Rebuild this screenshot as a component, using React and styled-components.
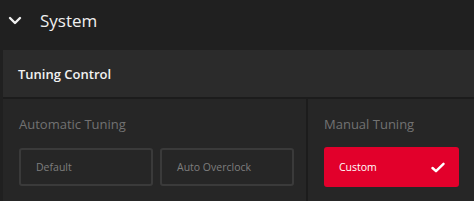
import React from "react";
import styled, { createGlobalStyle } from "styled-components";

const Global = createGlobalStyle`
  html, body {
    margin: 0;
    padding: 0;
    background: #202020;
    font-family: "Open Sans", "Noto Sans", sans-serif;
  }
`;

const Page = styled.div`
  width: 474px;
  height: 201px;
  overflow: hidden;
  background: #202020;
`;

const SectionHeader = styled.div`
  box-sizing: border-box;
  height: 50px;
  display: flex;
  align-items: center;
  padding: 0 0 9px 8px;
  gap: 18px;
  color: #f0f0f0;
  font-size: 17px;
`;

const Card = styled.div`
  margin-left: 3px;
  background: #262626;
`;

const CardHeader = styled.div`
  height: 47px;
  display: flex;
  align-items: center;
  padding-left: 15px;
  background: #2b2b2b;
  border-bottom: 2px solid #1c1c1c;
  color: #f2f2f2;
  font-size: 13px;
  font-weight: 600;
`;

const Body = styled.div`
  display: grid;
  grid-template-columns: 303px 2px 1fr;
  height: 102px;
`;

const Divider = styled.div`
  background: #1c1c1c;
`;

const Column = styled.div`
  padding: 15px 0 0 16px;
`;

const ColumnTitle = styled.div`
  color: #727272;
  font-size: 13px;
  line-height: 20px;
  margin-bottom: 14px;
`;

const Options = styled.div`
  display: flex;
  gap: 7px;
`;

const Option = styled.div`
  box-sizing: border-box;
  width: ${(p) => p.$w || 134}px;
  height: ${(p) => (p.$active ? 40 : 38)}px;
  margin-top: ${(p) => (p.$active ? -1 : 0)}px;
  display: flex;
  align-items: center;
  justify-content: space-between;
  padding: 0 ${(p) => (p.$active ? 14 : 16)}px 0 15px;
  border-radius: 3px;
  font-size: 10.5px;
  color: ${(p) => (p.$active ? "#ffffff" : "#7e7e7e")};
  background: ${(p) => (p.$active ? "#e2002b" : "transparent")};
  border: ${(p) => (p.$active ? "none" : "2px solid #3a3a3a")};
`;

const Check = () => (
  <svg width="14" height="11" viewBox="0 0 14 11">
    <path d="M1.5 6 L5 9.2 L12.5 1.8" fill="none" stroke="#fff" strokeWidth="2.4" strokeLinecap="round" strokeLinejoin="round" />
  </svg>
);

const Chevron = () => (
  <svg width="14" height="9" viewBox="0 0 14 9">
    <path d="M2 2 L7 7 L12 2" fill="none" stroke="#f0f0f0" strokeWidth="2.4" strokeLinecap="round" strokeLinejoin="round" />
  </svg>
);

export default function App() {
  return (
    <Page>
      <Global />
      <SectionHeader>
        <Chevron />
        <span>System</span>
      </SectionHeader>
      <Card>
        <CardHeader>Tuning Control</CardHeader>
        <Body>
          <Column>
            <ColumnTitle>Automatic Tuning</ColumnTitle>
            <Options>
              <Option>Default</Option>
              <Option>Auto Overclock</Option>
            </Options>
          </Column>
          <Divider />
          <Column>
            <ColumnTitle>Manual Tuning</ColumnTitle>
            <Options>
              <Option $active $w={135}>
                Custom
                <Check />
              </Option>
            </Options>
          </Column>
        </Body>
      </Card>
    </Page>
  );
}
